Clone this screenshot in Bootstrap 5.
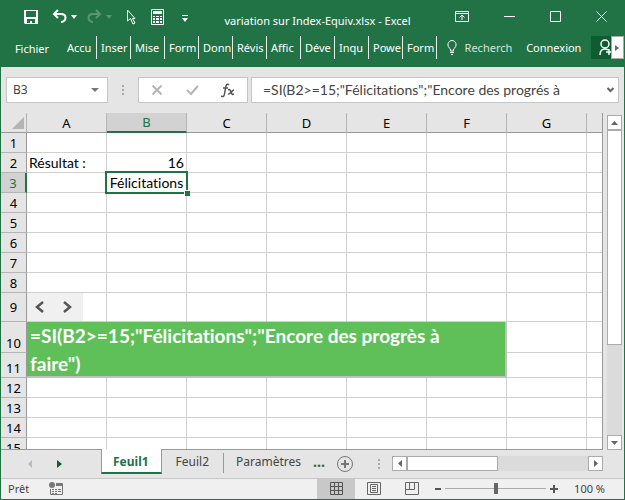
<!DOCTYPE html>
<html lang="fr">
<head>
<meta charset="utf-8">
<meta name="viewport" content="width=device-width, initial-scale=1">
<title>variation sur Index-Equiv.xlsx - Excel</title>
<link href="https://cdn.jsdelivr.net/npm/bootstrap@5.3.0/dist/css/bootstrap.min.css" rel="stylesheet">
<style>
:root { --xl: #217346; --chrome: #e5e5e5; --line: #d0d0d0; --edge: #ababab; --calc: Lato, "Noto Sans", sans-serif; --ui: "Noto Sans", "Open Sans", sans-serif; }
body { font: 12px/16px var(--ui); color: #444; background: var(--chrome); font-variant-ligatures: none; }
button, input { font: inherit; font-variant-ligatures: none; color: inherit; }
button { border: 0; padding: 0; background: none; }
svg { display: block; flex: none; }
.app-window { border: 1px solid var(--xl); border-top: 0; }
.app-head { background: var(--xl); color: #fff; font-size: 11px; }
.title-row { height: 33px; padding-left: 22px; padding-right: 17px; }
.quick-tools { gap: 10px; }
.win-tools { gap: 35px; }
.ribbon-row { height: 34px; padding-top: 3px; }
.ribbon-row > * { height: 23px; }
.file-tab { width: 62px; padding-top: 2px; }
.rib-tab { width: 34px; padding-left: 4px; border-right: 1px solid #e6f0ea; text-align: left; white-space: nowrap; }
.search-box { width: 52px; border: 0; padding: 0; background: none; color: #d5e5dc; }
.search-box::placeholder { color: #d5e5dc; opacity: 1; }
.share-btn { background: #0e5c2f; width: 20px; }
.more-btn { width: 13px; background: #fff; border: 1px solid var(--edge); }
.formula-row { padding: 10px 5px; height: 46px; gap: 3px; }
.field-box { background: #fff; border: 1px solid #c6c6c6; height: 26px; }
.name-box { width: 102px; }
.name-box input { width: 60px; }
.field-box input { border: 0; padding: 0 6px; background: none; outline: 0; min-width: 0; }
.fx-box { width: 110px; padding: 0 12px; }
.long-box { max-width: calc(100% - 245px); }
.grip { width: 2px; height: 10px; background: repeating-linear-gradient(#a8a8a8 0 2px, transparent 2px 4px); }
.field-box .formula-input { padding: 0 11px; font: 14px/20px var(--calc); font-variant-ligatures: none; }
.sheet-area { min-height: 0; }
.sheet-clip { min-width: 0; overflow: hidden; border-right: 1px solid #999; border-bottom: 1px solid #999; background: linear-gradient(var(--chrome) 19px, #999 19px 20px, #fff 20px); }
.grid-table { table-layout: fixed; width: 666px; border-collapse: separate; border-spacing: 0; color: #000; font: 14px/18px var(--calc); font-variant-ligatures: none; }
.grid-table th, .grid-table td { padding: 0 2px; height: 20px; border: 0 solid var(--line); border-width: 0 1px 1px 0; font-weight: 400; white-space: nowrap; vertical-align: bottom; background: #fff; }
.grid-table th { font: 13px/18px var(--ui); }
.grid-table thead th { background: var(--chrome); border-color: #999; border-right-color: #b5b5b5; text-align: center; }
.grid-table tbody th { background: var(--chrome); border-right-color: #999; border-bottom-color: #b5b5b5; padding: 0; text-align: center; }
.grid-table thead .on-col { background: #d2d2d2; color: var(--xl); border-bottom: 2px solid var(--xl); }
.grid-table tbody .on-row { background: #d2d2d2; color: var(--xl); border-right: 2px solid var(--xl); }
.grid-table .tall-9 > * { height: 29px; vertical-align: middle; }
.grid-table .tall-10 > * { height: 31px; }
.grid-table .tall-11 > * { height: 25px; }
.grid-table .active-cell { position: relative; text-align: center; }
.active-cell::before { content: ""; position: absolute; inset: -2px; border: 2px solid var(--xl); }
.active-cell::after { content: ""; position: absolute; right: -4px; bottom: -4px; width: 6px; height: 6px; background: var(--xl); border: solid #fff; border-width: 1px 0 0 1px; }
.grid-table .formula-cell { background: #5fc05a; color: #fff; border: 2px solid #c0c0c0; border-width: 0 2px 2px 0; font: 700 19px/28px var(--calc); font-variant-ligatures: none; vertical-align: top; white-space: normal; padding-left: 3px; }
.formula-cell div { height: 54px; }
.spinner { width: 56px; height: 28px; background: #f0f0f0; margin-left: -2px; padding: 0 8px; }
.v-scroll { width: 15px; margin: 2px 2px 0 4px; background: #dbdbdb; }
.h-scroll { width: 211px; height: 15px; background: #dbdbdb; margin-right: 21px; }
.bar-btn { width: 15px; height: 15px; background: #fff; border: 1px solid var(--edge); flex: none; }
.bar-thumb { background: #fff; border: 1px solid var(--edge); }
.v-scroll .bar-thumb { height: 64%; }
.h-scroll .bar-thumb { width: 43%; }
.tabs-row { height: 28px; }
.tab-nav { width: 100px; padding: 0 39px 0 27px; }
.sheet-tab { height: 24px; padding: 0 12px; }
.sheet-tab.current { background: #fff; color: var(--xl); font-weight: 700; border: 1px solid #999; border-top: 0; border-bottom: 2px solid var(--xl); padding: 2px 12px 0 11px; margin-top: -1px; height: 25px; }
.sheet-tab.ruled { border-right: 1px solid #999; height: 20px; margin-top: 3px; padding: 0 14px 2px; }
.sheet-tab.dots-btn { color: var(--xl); font-weight: 700; font-size: 14px; }
.status-row { height: 22px; background: #f0f0f0; border-top: 1px solid #c6c6c6; padding-left: 7px; padding-right: 19px; font-size: 11px; }
.view-btn { width: 38px; }
.view-btn.current { background: #c8c8c8; }
.zoom-range { appearance: none; width: 101px; height: 12px; background: linear-gradient(#aaa, #aaa) center / 100% 1px no-repeat; }
.zoom-range::-webkit-slider-thumb { appearance: none; width: 4px; height: 11px; background: #666; }
</style>
<script src="https://cdn.jsdelivr.net/npm/bootstrap@5.3.0/dist/js/bootstrap.bundle.min.js"></script>
</head>
<body>
<div class="app-window vh-100 d-flex flex-column overflow-hidden">
  <header class="app-head">
    <div class="title-row d-flex align-items-center">
      <div class="quick-tools d-flex align-items-center">
        <button class="me-1" aria-label="Enregistrer"><svg width="15" height="14" viewBox="0 0 15 14"><path fill-rule="evenodd" d="M1 0h14v14H2l-1-1zM3 1h10v6H3zM4 9h8v4H9v-2H7v2H4z" fill="#fff"/></svg></button>
        <div class="d-flex align-items-center gap-1"><button aria-label="Annuler"><svg width="15" height="15" viewBox="0 0 15 15" fill="none" stroke="#fff" stroke-width="2"><path d="M6 1 2 5l4 4M2 5h7c6 0 6 7 0 8"/></svg></button><svg width="6" height="4"><path d="M0 0h6L3 4z" fill="#fff"/></svg></div>
        <div class="d-flex align-items-center gap-1 opacity-25"><button aria-label="Rétablir"><svg width="15" height="15" viewBox="0 0 15 15" fill="none" stroke="#fff" stroke-width="2"><path d="m9 1 4 4-4 4M13 5H6c-6 0-6 7 0 8"/></svg></button><svg width="6" height="4"><path d="M0 0h6L3 4z" fill="#fff"/></svg></div>
        <button class="ms-1" aria-label="Sélectionner"><svg width="11" height="16" viewBox="0 0 11 16" fill="none" stroke="#fff"><path d="M1.500 1v11l3-2.500L7 15l2-1-2.500-4.500H9z"/></svg></button>
        <button class="ms-1" aria-label="Calculatrice"><svg width="13" height="16" viewBox="0 0 13 16"><path d="M.5.500h12v15H.5z" fill="none" stroke="#fff"/><path d="M2 2h9v3H2zM2 7h2v1H2zM5 7h3v1H5zM9 7h2v1H9zM2 9h2v2H2zM5 9h3v2H5zM9 9h2v2H9zM2 12h2v2H2zM5 12h3v2H5zM9 12h2v2H9z" fill="#fff"/></svg></button>
        <button class="ms-2 pt-1" aria-label="Personnaliser"><svg width="6" height="7"><path d="M0 0h6v1H0zM0 3h6L3 7z" fill="#fff"/></svg></button>
      </div>
      <div class="flex-fill text-center text-nowrap pt-2 pe-2">variation sur Index-Equiv.xlsx - Excel</div>
      <div class="win-tools d-flex align-items-center">
        <button aria-label="Options du ruban"><svg width="14" height="11" viewBox="0 0 14 11" fill="none" stroke="#fff"><path d="M.5.500h13v10H.5zM1 2.500h12M7 9V4.500M4.500 6.500 7 4l2.500 2.500"/></svg></button>
        <button aria-label="Réduire"><svg width="11" height="11"><path d="M0 5.500h11" stroke="#fff"/></svg></button>
        <button aria-label="Agrandir"><svg width="11" height="11"><path d="M.5.500h10v10H.5z" fill="none" stroke="#fff"/></svg></button>
        <button aria-label="Fermer"><svg width="11" height="11"><path d="m.5.500 10 10M10.500.500l-10 10" stroke="#fff"/></svg></button>
      </div>
    </div>
    <nav class="ribbon-row d-flex align-items-start" aria-label="Ruban">
      <button class="file-tab">Fichier</button>
      <button class="rib-tab">Accu</button>
      <button class="rib-tab">Inser</button>
      <button class="rib-tab">Mise</button>
      <button class="rib-tab">Form</button>
      <button class="rib-tab">Donn</button>
      <button class="rib-tab">Révis</button>
      <button class="rib-tab">Affic</button>
      <button class="rib-tab">Déve</button>
      <button class="rib-tab">Inqu</button>
      <button class="rib-tab">Powe</button>
      <button class="rib-tab">Form</button>
      <label class="d-flex align-items-center gap-2 ms-auto" for="search"><svg width="10" height="15" viewBox="0 0 10 15" fill="none" stroke="#fff"><path d="M3.500 11V9C-1 6 1 .5 5 .5S11 6 6.500 9v2zM3 12.500h4M4 14.500h2"/></svg><input id="search" class="search-box" placeholder="Recherch" aria-label="Rechercher"></label>
      <button class="mx-auto">Connexion</button>
      <button class="share-btn d-flex align-items-center ps-2 overflow-hidden" aria-label="Partager"><svg width="14" height="17" viewBox="0 0 14 17" fill="none" stroke="#fff" stroke-width="1.500"><circle cx="6" cy="5" r="4"/><path d="M1 16c0-4 2-6 5-6 1 0 2 0 3 1M10 10v6M7 13h6"/></svg></button>
      <button class="more-btn d-flex align-items-center justify-content-center" aria-label="Suite"><svg width="4" height="6"><path d="M0 0v6l4-3z" fill="#666"/></svg></button>
    </nav>
  </header>

  <section class="formula-row d-flex align-items-center" aria-label="Barre de formule">
    <div class="field-box name-box d-flex align-items-center justify-content-between pe-1"><input value="B3" aria-label="Zone Nom"><svg class="me-1" width="8" height="4"><path d="M0 0h8L4 4z" fill="#777"/></svg></div>
    <div class="grip mx-auto"></div>
    <div class="field-box fx-box d-flex align-items-center justify-content-between">
      <button aria-label="Annuler la saisie"><svg width="12" height="12"><path d="m1.500 1.500 9 9m0-9-9 9" stroke="#b5b5b5" stroke-width="2"/></svg></button>
      <button aria-label="Valider"><svg width="13" height="11"><path d="m1 5 4 4 7-8" fill="none" stroke="#b5b5b5" stroke-width="2"/></svg></button>
      <button aria-label="Insérer une fonction"><svg width="14" height="15" viewBox="0 0 14 15" fill="none" stroke="#555" stroke-width="1.500"><path d="M8 2C6 0 5 2 4.500 5L3.500 11C3 14 2 14 0 13M2 5h5M7 7c2-1 2 0 3 2s1 3 3 2M13 7c-2 0-4 5-6 4"/></svg></button>
    </div>
    <div class="field-box long-box d-flex align-items-center flex-grow-1 pe-1"><input class="formula-input flex-fill" value='=SI(B2&gt;=15;"Félicitations";"Encore des progrés à' aria-label="Formule"><button aria-label="Développer"><svg width="7" height="6"><path d="m.5 1 3 3 3-3" fill="none" stroke="#666" stroke-width="2"/></svg></button></div>
  </section>

  <main class="sheet-area flex-fill d-flex">
    <div class="sheet-clip flex-fill">
      <table class="grid-table">
        <colgroup><col style="width:26px"><col style="width:80px"><col style="width:80px"><col style="width:80px"><col style="width:80px"><col style="width:80px"><col style="width:80px"><col style="width:80px"><col style="width:80px"></colgroup>
        <thead><tr><th aria-label="Tout sélectionner"><svg class="ms-auto" width="12" height="15"><path d="M12 0v12H0z" fill="#b4b4b4"/></svg></th><th>A</th><th class="on-col">B</th><th>C</th><th>D</th><th>E</th><th>F</th><th>G</th><th></th></tr></thead>
        <tbody>
          <tr><th>1</th><td></td><td></td><td></td><td></td><td></td><td></td><td></td><td></td></tr>
          <tr><th>2</th><td>Résultat :</td><td class="text-end">16</td><td></td><td></td><td></td><td></td><td></td><td></td></tr>
          <tr><th class="on-row">3</th><td></td><td class="active-cell">Félicitations</td><td></td><td></td><td></td><td></td><td></td><td></td></tr>
          <tr><th>4</th><td></td><td></td><td></td><td></td><td></td><td></td><td></td><td></td></tr>
          <tr><th>5</th><td></td><td></td><td></td><td></td><td></td><td></td><td></td><td></td></tr>
          <tr><th>6</th><td></td><td></td><td></td><td></td><td></td><td></td><td></td><td></td></tr>
          <tr><th>7</th><td></td><td></td><td></td><td></td><td></td><td></td><td></td><td></td></tr>
          <tr><th>8</th><td></td><td></td><td></td><td></td><td></td><td></td><td></td><td></td></tr>
          <tr class="tall-9"><th>9</th><td><div class="spinner d-flex align-items-center justify-content-between"><button aria-label="Diminuer"><svg width="9" height="12"><path d="M8 1 2 6l6 5" fill="none" stroke="#555" stroke-width="2.500"/></svg></button><button aria-label="Augmenter"><svg width="12" height="12"><path d="m1 1 6 5-6 5" fill="none" stroke="#555" stroke-width="2.500"/></svg></button></div></td><td></td><td></td><td></td><td></td><td></td><td></td><td></td></tr>
          <tr class="tall-10"><th>10</th><td class="formula-cell" colspan="6" rowspan="2"><div>=SI(B2&gt;=15;"Félicitations";"Encore des progrès à<br>faire")</div></td><td></td><td></td></tr>
          <tr class="tall-11"><th>11</th><td></td><td></td></tr>
          <tr><th>12</th><td></td><td></td><td></td><td></td><td></td><td></td><td></td><td></td></tr>
          <tr><th>13</th><td></td><td></td><td></td><td></td><td></td><td></td><td></td><td></td></tr>
          <tr><th>14</th><td></td><td></td><td></td><td></td><td></td><td></td><td></td><td></td></tr>
          <tr><th>15</th><td></td><td></td><td></td><td></td><td></td><td></td><td></td><td></td></tr>
        </tbody>
      </table>
    </div>
    <div class="v-scroll d-flex flex-column">
      <button class="bar-btn d-flex align-items-center justify-content-center" aria-label="Haut"><svg width="7" height="4"><path d="M0 4h7L3.500 0z" fill="#666"/></svg></button>
      <div class="bar-thumb"></div>
      <button class="bar-btn mt-auto d-flex align-items-center justify-content-center" aria-label="Bas"><svg width="7" height="4"><path d="M0 0h7L3.500 4z" fill="#666"/></svg></button>
    </div>
  </main>

  <nav class="tabs-row d-flex align-items-start" aria-label="Feuilles">
    <div class="tab-nav d-flex align-items-center justify-content-between align-self-center"><button aria-label="Feuille précédente"><svg width="4" height="8"><path d="M4 0v8L0 4z" fill="#bbb"/></svg></button><button aria-label="Feuille suivante"><svg width="5" height="8"><path d="M0 0v8l5-4z" fill="#0e5c2f"/></svg></button></div>
    <button class="sheet-tab current">Feuil1</button>
    <button class="sheet-tab ruled">Feuil2</button>
    <button class="sheet-tab">Paramètres</button>
    <button class="sheet-tab dots-btn px-0" aria-label="Autres feuilles">...</button>
    <div class="flex-fill d-flex align-items-center justify-content-around align-self-center">
      <button aria-label="Nouvelle feuille"><svg width="16" height="16" fill="none" stroke="#777"><circle cx="8" cy="8" r="7.500"/><path d="M8 4v8M4 8h8" stroke-width="2"/></svg></button>
      <div class="grip"></div>
    </div>
    <div class="h-scroll d-flex align-self-center">
      <button class="bar-btn d-flex align-items-center justify-content-center" aria-label="Gauche"><svg width="4" height="7"><path d="M4 0v7L0 3.500z" fill="#666"/></svg></button>
      <div class="bar-thumb flex-shrink-0"></div>
      <button class="bar-btn ms-auto d-flex align-items-center justify-content-center" aria-label="Droite"><svg width="4" height="7"><path d="M0 0v7l4-3.500z" fill="#666"/></svg></button>
    </div>
  </nav>

  <footer class="status-row d-flex align-items-center">
    <span>Prêt</span>
    <button class="ms-3 ps-1" aria-label="Enregistrer une macro"><svg width="14" height="13" viewBox="0 0 14 13"><path d="M7 1.500h6.500v11h-12V7M7 3h6" fill="none" stroke="#777"/><circle cx="3" cy="3" r="3" fill="#777"/><path d="M3 7h2v1H3zM6 7h2v1H6zM9 7h3v1H9zM3 9h2v1H3zM6 9h2v1H6zM9 9h3v1H9zM7 2h6v2H7zM3 11h2v1H3zM6 11h2v1H6z" fill="#777"/></svg></button>
    <div class="d-flex align-self-stretch ms-auto">
      <button class="view-btn current d-flex align-items-center justify-content-center" aria-label="Normal"><svg width="13" height="13" fill="none" stroke="#555"><path d="M.5.500h12v12H.5zM4.500 0v13M8.500 0v13M0 4.500h13M0 8.500h13"/></svg></button>
      <button class="view-btn d-flex align-items-center justify-content-center" aria-label="Mise en page"><svg width="14" height="13" fill="none" stroke="#666"><path d="M.5.500h13v12H.5zM3.500 2.500h7v8h-7zM5 4.500h4M5 6.500h4M5 8.500h4"/></svg></button>
      <button class="view-btn d-flex align-items-center justify-content-center" aria-label="Sauts de page"><svg width="14" height="13" fill="none" stroke="#666"><path d="M.5.500h13v12H.5zM4.500 0v7.500M0 7.500h9.500V0"/></svg></button>
    </div>
    <button class="mx-1" aria-label="Zoom arrière"><svg width="6" height="2"><path d="M0 0h6v2H0z" fill="#555"/></svg></button>
    <input class="zoom-range" type="range" min="0" max="100" value="50" aria-label="Zoom">
    <button class="ms-1" aria-label="Zoom avant"><svg width="8" height="8"><path d="M3 0h2v8H3zM0 3h8v2H0z" fill="#555"/></svg></button>
    <button class="ms-3">100 %</button>
  </footer>
</div>
</body>
</html>
